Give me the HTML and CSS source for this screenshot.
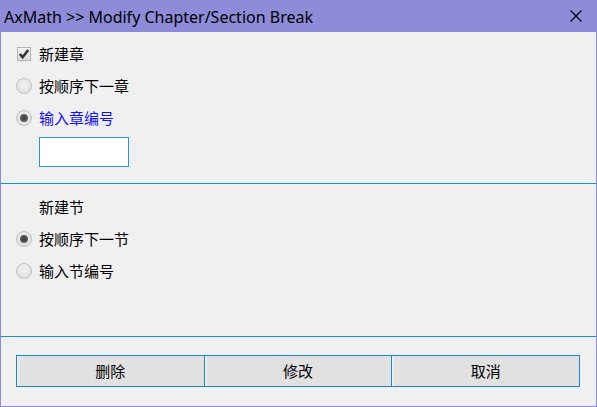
FILE: index.html
```html
<!DOCTYPE html>
<html lang="zh">
<head>
<meta charset="utf-8">
<title>AxMath >> Modify Chapter/Section Break</title>
<link rel="stylesheet" href="styles.css">
</head>
<body>
<div class="window">
  <div class="titlebar">
    <span class="title">AxMath &gt;&gt; Modify Chapter/Section Break</span>
    <svg class="close" width="12" height="12" viewBox="0 0 12 12"><path d="M0.5 0.5 L11.5 11.5 M11.5 0.5 L0.5 11.5" stroke="#000" stroke-width="1.1" fill="none"/></svg>
  </div>
  <div class="section chapter">
    <div class="row">
      <span class="check">
        <svg width="14" height="14" viewBox="0 0 14 14"><path d="M2.8 7 L5.6 10.3 L11.2 3" stroke="#333" stroke-width="2.6" fill="none" stroke-linejoin="miter"/></svg>
      </span>
      <span class="label">新建章</span>
    </div>
    <div class="row">
      <span class="radio"></span>
      <span class="label">按顺序下一章</span>
    </div>
    <div class="row">
      <span class="radio on"></span>
      <span class="label active">输入章编号</span>
    </div>
    <div class="field"></div>
  </div>
  <div class="sep"></div>
  <div class="section section2">
    <div class="row">
      <span class="spacer"></span>
      <span class="label">新建节</span>
    </div>
    <div class="row">
      <span class="radio on"></span>
      <span class="label">按顺序下一节</span>
    </div>
    <div class="row">
      <span class="radio"></span>
      <span class="label">输入节编号</span>
    </div>
  </div>
  <div class="sep"></div>
  <div class="buttons">
    <div class="btn">删除</div>
    <div class="btn">修改</div>
    <div class="btn">取消</div>
  </div>
</div>
</body>
</html>
```
FILE: styles.css
```css
html, body {
  margin: 0;
  padding: 0;
  background: #f0f0f0;
}
.window {
  width: 597px;
  height: 407px;
  box-sizing: border-box;
  border: 1px solid #8e8bd9;
  border-top: none;
  background: #f0f0f0;
  font-family: "Noto Sans CJK SC", "Noto Sans", sans-serif;
  font-size: 15px;
  color: #000;
  overflow: hidden;
}
.titlebar {
  height: 32px;
  margin: 0 -1px;
  background: #8e8bd9;
  display: flex;
  align-items: center;
  justify-content: space-between;
  padding: 0 15px 0 4px;
}
.title {
  font-family: "Noto Sans", sans-serif;
  font-size: 16px;
  line-height: 20px;
  color: #000;
  margin-top: 1px;
}
.close {
  display: block;
}
.section {
  display: flex;
  flex-direction: column;
}
.chapter {
  padding-top: 6px;
}
.section2 {
  padding-top: 7px;
  padding-bottom: 49px;
}
.row {
  height: 32px;
  display: flex;
  align-items: center;
  padding-left: 15px;
}
.label {
  line-height: 20px;
  margin-left: 7px;
}
.label.active {
  color: #1010ff;
}
.check {
  width: 14px;
  height: 14px;
  box-sizing: border-box;
  border: 1px solid #b4b4b4;
  background: linear-gradient(#f4f4f4, #dcdcdc);
  display: flex;
  align-items: center;
  justify-content: center;
  margin-left: 1px;
  margin-right: 1px;
}
.check svg {
  display: block;
  margin: -1px;
}
.spacer {
  width: 16px;
  height: 16px;
}
.radio {
  width: 16px;
  height: 16px;
  box-sizing: border-box;
  border-radius: 50%;
  border: 1px solid #c0c0c0;
  background: radial-gradient(circle at 50% 40%, #f2f2f2 0%, #e4e4e4 60%, #d6d6d6 100%);
  position: relative;
}
.radio.on::after {
  content: "";
  position: absolute;
  left: 3px;
  top: 3px;
  width: 8px;
  height: 8px;
  border-radius: 50%;
  background: radial-gradient(circle, #3c3c3c 0%, #555 55%, #8a8a8a 100%);
}
.field {
  width: 90px;
  height: 30px;
  box-sizing: border-box;
  border: 1px solid #1e9be2;
  background: #fff;
  margin: 3px 0 16px 38px;
}
.sep {
  height: 1px;
  background: #1a8fd5;
  margin: 0 -1px;
}
.buttons {
  display: flex;
  margin: 18px 0 0 15px;
  width: 564px;
  height: 32px;
  box-sizing: border-box;
  border: 1px solid #1787d0;
}
.btn {
  flex: 1;
  display: flex;
  align-items: center;
  justify-content: center;
  background: #e1e1e1;
  box-shadow: inset 2px 0 0 #ececec;
  line-height: 20px;
}
.btn + .btn {
  border-left: 1px solid #1787d0;
}
```
